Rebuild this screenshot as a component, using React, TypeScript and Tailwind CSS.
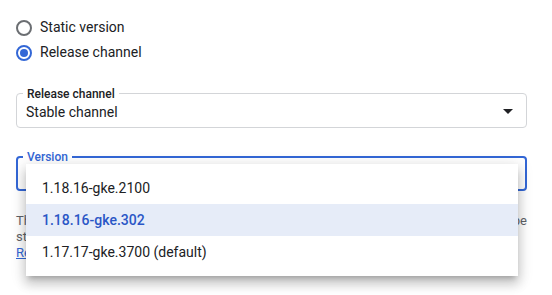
import { useState } from 'react';

const versions = ['1.18.16-gke.2100', '1.18.16-gke.302', '1.17.17-gke.3700 (default)'];

function Radio({ checked, label }: { checked: boolean; label: string }) {
  return (
    <label className="flex h-[25px] items-center gap-2 text-[14px] text-[#202124]">
      <span
        className={
          checked
            ? 'flex h-4 w-4 items-center justify-center rounded-full border-2 border-[#3367d6]'
            : 'flex h-4 w-4 items-center justify-center rounded-full border-2 border-[#6b6e72]'
        }
      >
        {checked && <span className="h-2 w-2 rounded-full bg-[#3367d6]" />}
      </span>
      {label}
    </label>
  );
}

export default function App() {
  const [selected] = useState(1);

  return (
    <div className="h-[295px] w-[552px] bg-white px-4 pt-[15px] font-['Roboto',sans-serif]">
      <Radio checked={false} label="Static version" />
      <Radio checked={true} label="Release channel" />

      <div className="relative mt-[28px] flex h-[35px] w-[511px] items-center justify-between rounded border border-[#d3d5d8] pl-[9px] pr-[13px]">
        <span className="absolute -top-[8px] left-[6px] bg-white px-1 text-[12px] font-medium leading-4 text-[#202124]">
          Release channel
        </span>
        <span className="pt-[4px] text-[14px] text-[#202124]">Stable channel</span>
        <svg width="10" height="5" viewBox="0 0 10 5" className="mt-[1px]">
          <path d="M0 0h10L5 5z" fill="#202124" />
        </svg>
      </div>

      <div className="relative mt-[28px] h-[35px] w-[511px] rounded border-2 border-[#3367d6]">
        <span className="absolute -top-[9px] left-[5px] bg-white px-1 text-[12px] font-medium leading-4 text-[#3367d6]">
          Version
        </span>

        <div className="absolute left-[8px] top-[6px] z-10 w-[492px] bg-white py-2 shadow-[0_5px_5px_-3px_rgba(0,0,0,0.2),0_8px_10px_1px_rgba(0,0,0,0.14),0_3px_14px_2px_rgba(0,0,0,0.12)]">
          {versions.map((v, i) => (
            <div
              key={v}
              className={
                i === selected
                  ? 'flex h-8 items-center bg-[#e6ecf8] px-4 text-[14px] font-medium text-[#2a56c6]'
                  : 'flex h-8 items-center px-4 text-[14px] text-[#202124]'
              }
            >
              {v}
            </div>
          ))}
        </div>
      </div>

      <div className="mt-[22px] w-[511px] text-[13px] leading-4 text-[#5f6368]">
        <p className="whitespace-nowrap text-justify [text-align-last:justify]">
          The cluster is upgraded automatically as versions are released. Nodes will be
        </p>
        <p>stopped and recreated during an upgrade.</p>
        <a className="text-[#3367d6] underline">Release channels documentation</a>
      </div>
    </div>
  );
}
